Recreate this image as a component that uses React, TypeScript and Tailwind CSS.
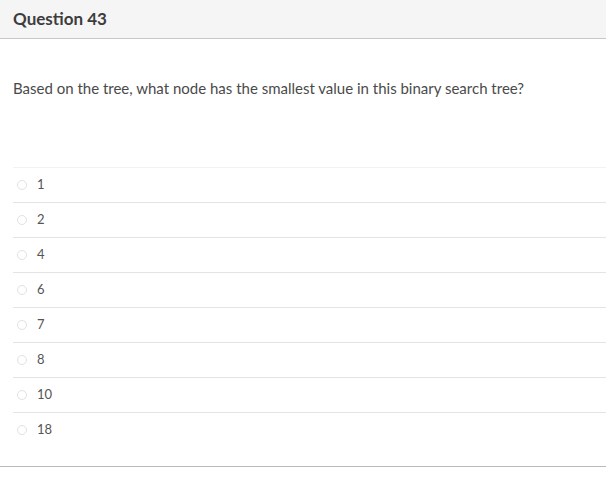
const answers = ['1', '2', '4', '6', '7', '8', '10', '18'];

export default function App() {
  return (
    <div className="w-[606px] h-[482px] bg-white font-['Lato','Open_Sans',sans-serif] text-[#3a3a3a]">
      <div className="h-[39px] bg-[#f5f5f6] border-b border-[#c8c8ca] px-[13px] flex items-center">
        <h2 className="text-[17px] font-bold text-[#3d3d3d] leading-none pb-[1px]">Question 43</h2>
      </div>

      <div className="pt-[40px]">
        <p className="px-[13px] text-[15px] leading-[19px] text-[#4a4a4a]">
          Based on the tree, what node has the smallest value in this binary search tree?
        </p>

        <div className="mt-[69px] ml-[13px]">
          {answers.map((a, i) => (
            <label
              key={a}
              className={`h-[35px] flex items-center border-t ${
                i === 0 ? 'border-[#f2f2f2]' : 'border-[#e4e4e4]'
              }`}
            >
              <input type="radio" name="q43" className="hidden" />
              <span className="ml-[4px] w-[10px] h-[10px] rounded-full border border-[#e2e2e2]" />
              <span className="ml-[10px] text-[13px] text-[#555]">{a}</span>
            </label>
          ))}
        </div>

        <div className="mt-[19px] border-t border-[#b9b9b9]" />
      </div>
    </div>
  );
}
